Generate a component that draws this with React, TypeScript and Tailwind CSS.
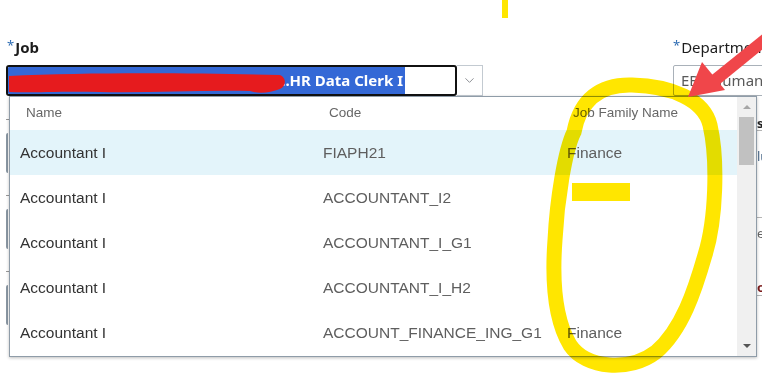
import { ChevronDown } from 'lucide-react';

type JobRow = { name: string; code: string; family: string; active?: boolean };

const rows: JobRow[] = [
  { name: 'Accountant I', code: 'FIAPH21', family: 'Finance', active: true },
  { name: 'Accountant I', code: 'ACCOUNTANT_I2', family: '' },
  { name: 'Accountant I', code: 'ACCOUNTANT_I_G1', family: '' },
  { name: 'Accountant I', code: 'ACCOUNTANT_I_H2', family: '' },
  { name: 'Accountant I', code: 'ACCOUNT_FINANCE_ING_G1', family: 'Finance' },
];

function Required() {
  return <span className="text-[#2f6db3] text-[13px] leading-[13px] mt-[2px] mr-[1px]">*</span>;
}

function BehindField() {
  // form fields behind the open dropdown, only their edges peek out
  return (
    <div className="flex flex-col">
      <div className="h-[12px] flex items-center">
        <div className="w-[3px] h-[1px] bg-[#999]" />
      </div>
      <div className="mt-[8px] h-[40px] w-[451px] border-l-2 border-[#8a97a3] rounded-[2px]" />
    </div>
  );
}

function JobField() {
  return (
    <div className="ml-[6px] w-[477px] shrink-0">
      <div className="flex items-start h-[20px] pl-[1px]">
        <Required />
        <span className="font-bold text-[15px] leading-[20px] text-[#1c1c1c]">Job</span>
      </div>
      <div className="mt-[8px] flex h-[31px]">
        <div className="w-[451px] border-2 border-[#111] rounded-[3px] bg-white overflow-hidden">
          <div className="h-full w-[397px] bg-[#3468d6] flex items-center justify-end pr-[2px]">
            <span className="text-white font-bold text-[15px] leading-none whitespace-nowrap">...HR Data Clerk I</span>
          </div>
        </div>
        <div className="w-[26px] border border-[#c3cad1] border-l-0 flex items-center justify-center bg-white">
          <ChevronDown size={15} strokeWidth={1.5} className="text-[#85898e]" />
        </div>
      </div>
      <div className="mt-[17px] flex flex-col gap-[16px]">
        <BehindField />
        <BehindField />
        <BehindField />
      </div>
    </div>
  );
}

function DepartmentField() {
  return (
    <div className="ml-[190px] w-[200px] shrink-0">
      <div className="flex items-start h-[20px]">
        <Required />
        <span className="text-[15px] leading-[20px] text-[#1c1c1c] whitespace-nowrap">Department Name</span>
      </div>
      <div className="mt-[8px] h-[31px] border border-[#a9b1b9] rounded-[2px] flex items-center pl-[7px]">
        <span className="text-[15px] text-[#5a5a5a] whitespace-nowrap">EBS Human Resources</span>
      </div>
      <div className="flex flex-col text-[13px]">
        <div className="h-[35px] pt-[20px] border-b border-[#b5b5b5] font-bold text-[#222] leading-[14px] pl-[84px]">ss</div>
        <div className="h-[87px] pt-[18px] border-b border-[#b5b5b5] text-[#4c6a8a] pl-[84px] leading-[14px]">lu</div>
        <div className="h-[78px] pt-[8px] border-b border-[#b5b5b5] text-[#666] pl-[84px] leading-[14px]">
          <div>ee</div>
          <div className="mt-[40px] text-[#7a1a1a] font-bold">oo</div>
        </div>
      </div>
    </div>
  );
}

function Scrollbar() {
  return (
    <div className="w-[19px] shrink-0 bg-[#f0f0f0] flex flex-col items-center">
      <div className="mt-[8px] w-0 h-0 border-l-[4px] border-r-[4px] border-b-[4px] border-l-transparent border-r-transparent border-b-[#a6a6a6]" />
      <div className="mt-[8px] w-[15px] h-[48px] bg-[#c1c1c1]" />
      <div className="flex-1" />
      <div className="mb-[8px] w-0 h-0 border-l-[4px] border-r-[4px] border-t-[4px] border-l-transparent border-r-transparent border-t-[#555]" />
    </div>
  );
}

function Dropdown() {
  return (
    <div className="absolute left-[9px] top-[96px] w-[748px] h-[261px] border border-[#8f9ca8] bg-white shadow-[0_1px_3px_rgba(0,0,0,0.25)] flex font-['Liberation_Sans',Arial,sans-serif]">
      <div className="flex-1 flex flex-col">
        <div className="h-[33px] grid grid-cols-[303px_244px_180px] items-center text-[13.5px] text-[#676767]">
          <div className="pl-[16px]">Name</div>
          <div className="pl-[16px]">Code</div>
          <div className="pl-[16px]">Job Family Name</div>
        </div>
        {rows.map((r, i) => (
          <div
            key={i}
            className={`h-[45px] grid grid-cols-[303px_244px_180px] items-center text-[15.5px] ${r.active ? 'bg-[#e3f4fa]' : ''}`}
          >
            <div className="pl-[10px] text-[#333]">{r.name}</div>
            <div className="pl-[10px] text-[#5e5e5e] whitespace-nowrap">{r.code}</div>
            <div className="pl-[10px] text-[#5e5e5e]">{r.family}</div>
          </div>
        ))}
      </div>
      <Scrollbar />
    </div>
  );
}

function Annotations() {
  return (
    <svg className="absolute inset-0 pointer-events-none" width="762" height="379" viewBox="0 0 762 379">
      {/* red scribble hiding the name */}
      <path
        d="M9 76 C90 72 200 73 280 75 C287 78 286 86 280 89 C270 93 258 94 250 91 C200 90 150 93 100 92 C60 91 30 93 9 92 Z"
        fill="#e61b1e"
      />
      <g style={{ mixBlendMode: 'multiply' }}>
        <rect x="502" y="0" width="6" height="18" fill="#ffe600" />
        <rect x="572" y="183" width="58" height="18" fill="#ffe600" />
        <path
          d="M574 132 C580 100 600 84 632 85 C672 86 704 100 710 125 C718 160 716 220 705 255 C695 290 682 330 656 352 C630 372 586 369 570 345 C555 320 552 280 555 240 C557 200 565 150 574 132 Z"
          fill="none"
          stroke="#ffe600"
          strokeWidth="15"
          strokeLinecap="round"
        />
      </g>
      {/* red arrow */}
      <line x1="714" y1="81" x2="772" y2="34" stroke="#f0464a" strokeWidth="12" />
      <polygon points="688,97 702,62 725,90" fill="#f0464a" />
    </svg>
  );
}

export default function App() {
  return (
    <div className="relative w-[762px] h-[379px] overflow-hidden bg-white font-['Noto_Sans','Open_Sans',sans-serif]">
      <div className="flex pt-[37px]">
        <JobField />
        <DepartmentField />
      </div>
      <Dropdown />
      <Annotations />
    </div>
  );
}
